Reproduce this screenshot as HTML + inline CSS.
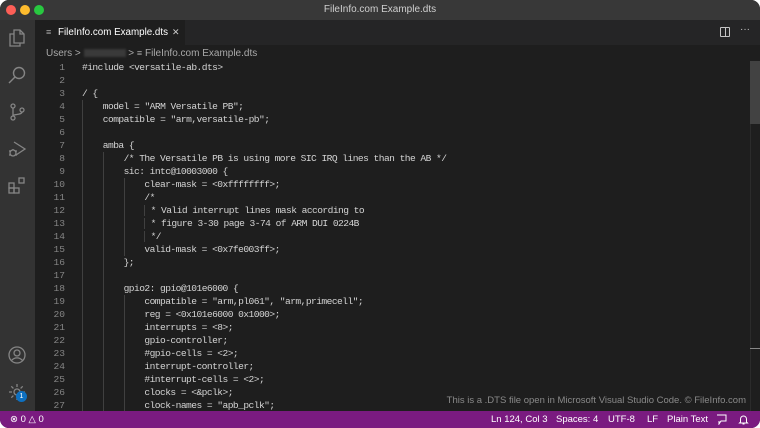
<!DOCTYPE html>
<html><head><style>
*{margin:0;padding:0;box-sizing:border-box}
body{width:760px;height:428px;background:#fff;overflow:hidden;font-family:"Liberation Sans",sans-serif}
.win{position:absolute;left:0;top:0;width:760px;height:428px;border-radius:9px;overflow:hidden;background:#1e1e1e}
.title{position:absolute;left:0;top:0;width:760px;height:20px;background:#383838;color:#cfcfcf;font-size:10px;text-align:center;line-height:20px}
.dot{position:absolute;top:5px;width:10px;height:10px;border-radius:50%}
.act{position:absolute;left:0;top:20px;width:35px;height:391px;background:#333333}
.act svg{position:absolute;left:7px}
.tabs{position:absolute;left:35px;top:20px;width:725px;height:25px;background:#252526}
.tab{position:absolute;left:0;top:0;width:150px;height:25px;background:#1e1e1e;color:#fff;font-size:9.8px;line-height:25px;padding-left:23px;white-space:nowrap}
.crumb{position:absolute;left:46px;top:46px;font-size:10px;color:#a9a9a9;line-height:14px;white-space:nowrap}
.code{position:absolute;left:35px;top:61px;font-family:"Liberation Mono",monospace;font-size:9.6px;letter-spacing:-0.55px;color:#d4d4d4}
.ln{height:13px;line-height:13px;white-space:pre;position:relative}
.n{display:inline-block;width:30px;text-align:right;color:#858585;margin-right:17px;letter-spacing:0}
.g{display:inline-block;width:20.8px;height:13px;border-left:1px solid #404040;vertical-align:top}
.status{position:absolute;left:0;top:411px;width:760px;height:17px;background:#7a1b80;color:#fff;font-size:9.5px;line-height:17px;white-space:nowrap}
</style></head><body><div class="win">
<div class="title">FileInfo.com Example.dts
<div class="dot" style="left:6px;background:#fe5f57"></div>
<div class="dot" style="left:20px;background:#febc2e"></div>
<div class="dot" style="left:34px;background:#28c840"></div></div>
<div class="act">
<svg style="top:8px" width="20" height="20" viewBox="0 0 20 20" fill="none" stroke="#858585" stroke-width="1.3"><path d="M7 2h6l4 4v9H7z"/><path d="M13 2v4h4"/><path d="M7 6H3v12h10v-3"/></svg>
<svg style="top:45px" width="20" height="20" viewBox="0 0 20 20" fill="none" stroke="#858585" stroke-width="1.4"><circle cx="12" cy="8" r="5.5"/><path d="M8 12l-6 6"/></svg>
<svg style="top:82px" width="20" height="20" viewBox="0 0 20 20" fill="none" stroke="#858585" stroke-width="1.3"><circle cx="6" cy="4" r="2"/><circle cx="6" cy="16" r="2"/><circle cx="15" cy="8" r="2"/><path d="M6 6v8M15 10c0 3-9 2-9 4"/></svg>
<svg style="top:119px" width="20" height="20" viewBox="0 0 20 20" fill="none" stroke="#858585" stroke-width="1.3"><path d="M7 3l11 7-9 6"/><circle cx="6" cy="14" r="3"/><path d="M2 12h2M2 16h2M8 12h2M8 16h2M6 10v1"/></svg>
<svg style="top:156px" width="20" height="20" viewBox="0 0 20 20" fill="none" stroke="#858585" stroke-width="1.3"><rect x="2" y="7" width="5" height="5"/><rect x="2" y="12" width="5" height="5"/><rect x="7" y="12" width="5" height="5"/><rect x="12" y="2" width="5" height="5"/></svg>
<svg style="top:325px" width="20" height="20" viewBox="0 0 20 20" fill="none" stroke="#858585" stroke-width="1.3"><circle cx="10" cy="10" r="8"/><circle cx="10" cy="8" r="3"/><path d="M4.5 15.5c3-3.5 8-3.5 11 0"/></svg>
<svg style="top:362px" width="20" height="20" viewBox="0 0 20 20" fill="none" stroke="#858585" stroke-width="1.3"><circle cx="10" cy="10" r="3"/><path d="M10 2v3M10 15v3M2 10h3M15 10h3M4.3 4.3l2.1 2.1M13.6 13.6l2.1 2.1M4.3 15.7l2.1-2.1M13.6 6.4l2.1-2.1"/></svg>
<div style="position:absolute;left:16px;top:371px;width:11px;height:11px;border-radius:50%;background:#0e70c0;color:#fff;font-size:7px;text-align:center;line-height:11px">1</div>
</div>
<div class="tabs"><div class="tab"><span style="position:absolute;left:11px;color:#aaa;font-size:9px">≡</span>FileInfo.com Example.dts<span style="position:absolute;left:137px;color:#ccc;font-size:9px">✕</span></div>
<div style="position:absolute;right:30px;top:7px;width:10px;height:10px;border:1px solid #c5c5c5;border-radius:1px"><div style="position:absolute;left:3.5px;top:0;width:1px;height:8px;background:#c5c5c5"></div></div>
<div style="position:absolute;right:10px;top:4px;color:#c5c5c5;font-size:10px">···</div></div>
<div class="crumb">Users &gt; <span style="display:inline-block;width:42px;height:8px;background:#3a3a3a;filter:blur(1px);vertical-align:middle"></span> &gt; <span style="font-size:9px">≡</span> FileInfo.com Example.dts</div>
<div class="code">
<div class="ln"><span class="n">1</span>#include &lt;versatile-ab.dts&gt;</div>
<div class="ln"><span class="n">2</span></div>
<div class="ln"><span class="n">3</span>/ {</div>
<div class="ln"><span class="n">4</span><span class="g"></span>model = "ARM Versatile PB";</div>
<div class="ln"><span class="n">5</span><span class="g"></span>compatible = "arm,versatile-pb";</div>
<div class="ln"><span class="n">6</span><span class="g"></span></div>
<div class="ln"><span class="n">7</span><span class="g"></span>amba {</div>
<div class="ln"><span class="n">8</span><span class="g"></span><span class="g"></span>/* The Versatile PB is using more SIC IRQ lines than the AB */</div>
<div class="ln"><span class="n">9</span><span class="g"></span><span class="g"></span>sic: intc@10003000 {</div>
<div class="ln"><span class="n">10</span><span class="g"></span><span class="g"></span><span class="g"></span>clear-mask = &lt;0xffffffff&gt;;</div>
<div class="ln"><span class="n">11</span><span class="g"></span><span class="g"></span><span class="g"></span>/*</div>
<div class="ln"><span class="n">12</span><span class="g"></span><span class="g"></span><span class="g"></span><span style="border-left:1px solid #404040"> * Valid interrupt lines mask according to</span></div>
<div class="ln"><span class="n">13</span><span class="g"></span><span class="g"></span><span class="g"></span><span style="border-left:1px solid #404040"> * figure 3-30 page 3-74 of ARM DUI 0224B</span></div>
<div class="ln"><span class="n">14</span><span class="g"></span><span class="g"></span><span class="g"></span><span style="border-left:1px solid #404040"> */</span></div>
<div class="ln"><span class="n">15</span><span class="g"></span><span class="g"></span><span class="g"></span>valid-mask = &lt;0x7fe003ff&gt;;</div>
<div class="ln"><span class="n">16</span><span class="g"></span><span class="g"></span>};</div>
<div class="ln"><span class="n">17</span><span class="g"></span><span class="g"></span></div>
<div class="ln"><span class="n">18</span><span class="g"></span><span class="g"></span>gpio2: gpio@101e6000 {</div>
<div class="ln"><span class="n">19</span><span class="g"></span><span class="g"></span><span class="g"></span>compatible = "arm,pl061", "arm,primecell";</div>
<div class="ln"><span class="n">20</span><span class="g"></span><span class="g"></span><span class="g"></span>reg = &lt;0x101e6000 0x1000&gt;;</div>
<div class="ln"><span class="n">21</span><span class="g"></span><span class="g"></span><span class="g"></span>interrupts = &lt;8&gt;;</div>
<div class="ln"><span class="n">22</span><span class="g"></span><span class="g"></span><span class="g"></span>gpio-controller;</div>
<div class="ln"><span class="n">23</span><span class="g"></span><span class="g"></span><span class="g"></span>#gpio-cells = &lt;2&gt;;</div>
<div class="ln"><span class="n">24</span><span class="g"></span><span class="g"></span><span class="g"></span>interrupt-controller;</div>
<div class="ln"><span class="n">25</span><span class="g"></span><span class="g"></span><span class="g"></span>#interrupt-cells = &lt;2&gt;;</div>
<div class="ln"><span class="n">26</span><span class="g"></span><span class="g"></span><span class="g"></span>clocks = &lt;&amp;pclk&gt;;</div>
<div class="ln"><span class="n">27</span><span class="g"></span><span class="g"></span><span class="g"></span>clock-names = "apb_pclk";</div>
</div>
<div style="position:absolute;left:750px;top:61px;width:10px;height:63px;background:#424242"></div>
<div style="position:absolute;left:750px;top:124px;width:1px;height:287px;background:#2b2b2b"></div>
<div style="position:absolute;left:750px;top:348px;width:10px;height:1px;background:#888"></div>
<div style="position:absolute;right:14px;top:395px;font-size:9.5px;color:#8a8a8a">This is a .DTS file open in Microsoft Visual Studio Code. © FileInfo.com</div>
<div class="status"><span style="position:absolute;left:10px">⊗ 0 △ 0</span>
<span style="position:absolute;left:491px">Ln 124, Col 3</span>
<span style="position:absolute;left:556px">Spaces: 4</span>
<span style="position:absolute;left:608px">UTF-8</span>
<span style="position:absolute;left:647px">LF</span>
<span style="position:absolute;left:667px">Plain Text</span>
<svg style="position:absolute;left:716px;top:3px" width="11" height="11" viewBox="0 0 11 11" fill="none" stroke="#fff" stroke-width="1"><path d="M1 1h9v6H5l-2 3V7"/></svg>
<svg style="position:absolute;left:738px;top:3px" width="11" height="11" viewBox="0 0 11 11" fill="none" stroke="#fff" stroke-width="1"><path d="M2.5 8V5a3 3 0 016 0v3l1 1h-8zM4.5 10h2"/></svg></div>
</div></body></html>
